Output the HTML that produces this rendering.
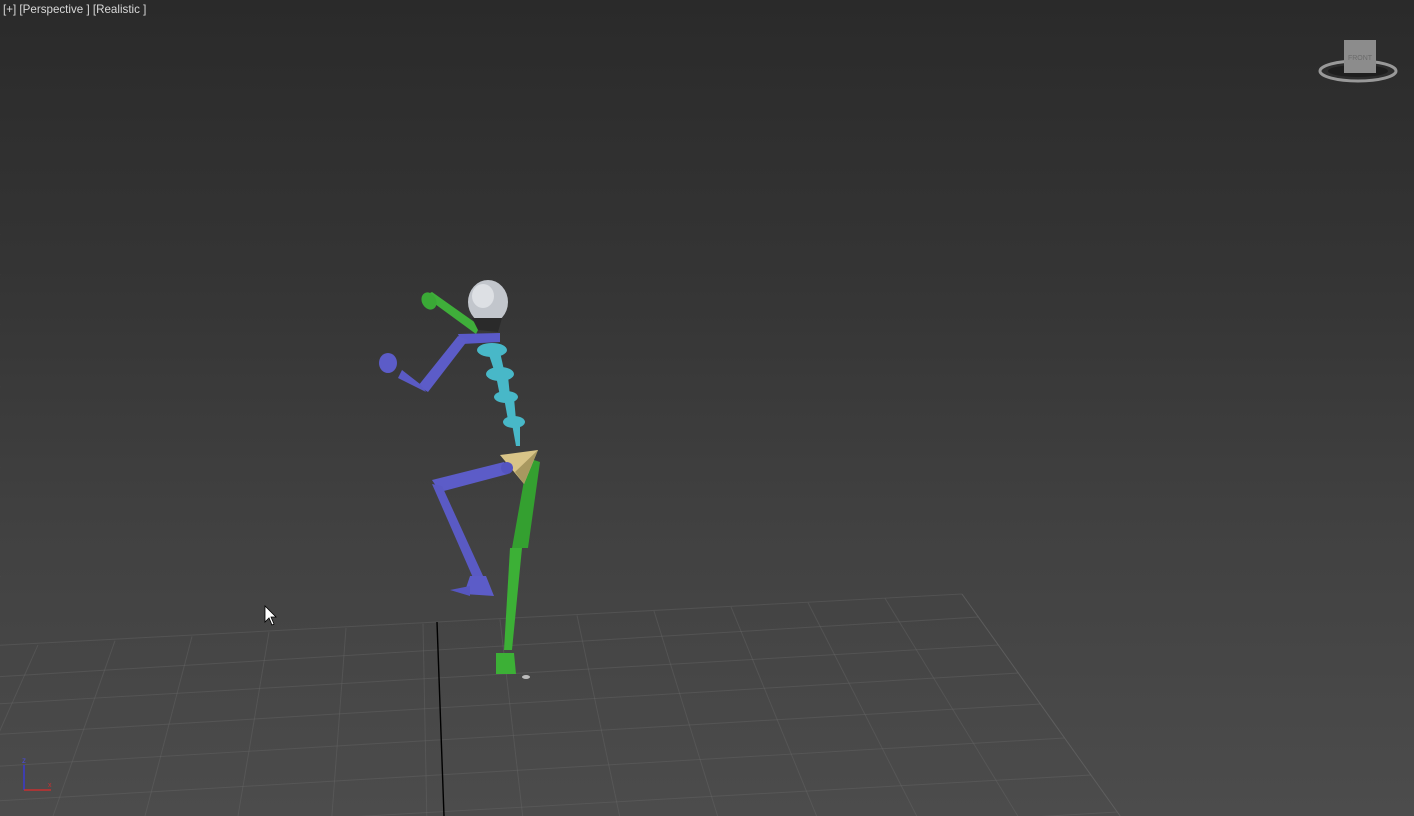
<!DOCTYPE html>
<html><head><meta charset="utf-8"><style>
html,body{margin:0;padding:0;width:1414px;height:816px;overflow:hidden}
body{background:linear-gradient(to bottom,#2a2a2a 0%,#353535 35%,#414141 65%,#4c4c4c 100%);position:relative;font-family:"Liberation Sans",sans-serif}
#lbl{position:absolute;left:3px;top:3px;font-size:11.6px;color:#d8d8d8;white-space:pre}
svg{position:absolute;left:0;top:0;overflow:hidden}
</style></head><body>
<svg width="1414" height="816" id="g">
<g id="grid" stroke="#6a6a6a" stroke-opacity="0.4" stroke-width="1" fill="none"></g>
<line x1="437" y1="622" x2="444" y2="816" stroke="#000" stroke-width="1.4"/>
<g stroke="none">
 <polygon points="424,296 432,292 480,326 476,334" fill="#3fae3a"/>
 <ellipse cx="429" cy="301" rx="7" ry="9" fill="#3aa936" transform="rotate(-30 429 301)"/>
 <ellipse cx="488" cy="302" rx="20" ry="22" fill="#c2c6cc"/>
 <ellipse cx="483" cy="296" rx="11" ry="12" fill="#dde0e4"/>
 <polygon points="472,318 502,318 498,332 478,330" fill="#2a2a2a"/>
 <polygon points="458,334 500,333 500,342 462,344" fill="#5a5ac8"/>
 <polygon points="458,336 468,340 428,392 418,386" fill="#5c5cc8"/>
 <polygon points="420,384 426,392 398,378 402,370" fill="#5a5ac4"/>
 <ellipse cx="388" cy="363" rx="9" ry="10" fill="#5c5cc8"/>
 <g fill="#48b8c8">
  <ellipse cx="492" cy="350" rx="15" ry="7"/>
  <polygon points="488,352 500,352 504,370 494,370"/>
  <ellipse cx="500" cy="374" rx="14" ry="7"/>
  <polygon points="496,376 508,376 510,396 500,396"/>
  <ellipse cx="506" cy="397" rx="12" ry="6"/>
  <polygon points="504,398 514,398 516,420 508,420"/>
  <ellipse cx="514" cy="422" rx="11" ry="6"/>
  <polygon points="512,424 520,424 520,446 516,446"/>
 </g>
 <polygon points="528,458 540,462 528,548 512,548" fill="#34a030"/>
 <polygon points="510,548 522,548 512,650 504,650" fill="#3cb036"/>
 <polygon points="496,653 514,653 516,674 496,674" fill="#3cb036"/>
 <polygon points="500,455 538,450 524,484" fill="#d8c488"/>
 <polygon points="515,472 538,450 524,484" fill="#a89860"/>
 <polygon points="432,480 504,462 508,474 440,492" fill="#5c5cc8"/>
 <circle cx="507" cy="468" r="6" fill="#5454c0"/>
 <polygon points="432,484 442,486 484,578 474,580" fill="#5a5ac4"/>
 <polygon points="470,576 486,576 494,596 464,594" fill="#5c5cc8"/>
 <polygon points="450,590 470,586 470,596" fill="#5656c0"/>
</g>
<ellipse cx="1358" cy="71" rx="38" ry="10" fill="none" stroke="#999" stroke-width="3"/>
<ellipse cx="1358" cy="71" rx="30" ry="6" fill="#1e1e1e"/>
<rect x="1344" y="40" width="32" height="33" fill="#8c8c8c"/>
<text x="1360" y="60" font-size="7" fill="#6a6a6a" text-anchor="middle" font-family="Liberation Sans">FRONT</text>
<line x1="24" y1="765" x2="24" y2="790" stroke="#3a3ad0" stroke-width="1.5"/>
<line x1="24" y1="790" x2="51" y2="790" stroke="#c83030" stroke-width="1.5"/>
<text x="22" y="763" font-size="8" fill="#4a4ad8" font-family="Liberation Sans">z</text>
<text x="48" y="787" font-size="7" fill="#c83030" font-family="Liberation Sans">x</text>
<ellipse cx="526" cy="677" rx="4" ry="2" fill="#bbb"/>
<path d="M265,606 L265,622 L269,618 L272,625 L274,624 L271,617 L276,617 Z" fill="#fff" stroke="#000" stroke-width="0.8"/>
</svg>
<div id="lbl">[+] [Perspective ] [Realistic ]</div>
<script>
var g=document.getElementById('grid'),s='';
var vx=407,vy=-185;
function rx(y){return 962+(962-vx)/(594-vy)*(y-594);}
var rws=[[622,594],[650,617],[678,645],[708,673],[740,704],[775,738],[812,775],[852,812]];
rws.forEach(function(r){var xr=rx(r[1]);var sl=(r[1]-r[0])/(xr-437);var yl=r[0]-sl*437;
 s+='<line x1="0" y1="'+yl.toFixed(1)+'" x2="'+xr.toFixed(1)+'" y2="'+r[1]+'"/>';});
s+='<line x1="962" y1="594" x2="'+rx(816).toFixed(1)+'" y2="816"/>';
for(var x=962;x>-500;x-=77){
 var y0=647-0.055*x;
 var t=(816-vy)/(y0-vy); var x2=vx+(x-vx)*t;
 var xs=x,ys=y0;
 if(x<0){var tt=(0-vx)/(x-vx); ys=vy+(y0-vy)*tt; xs=0; if(ys>816)continue;}
 s+='<line x1="'+xs+'" y1="'+ys.toFixed(1)+'" x2="'+x2.toFixed(1)+'" y2="816"/>';
}
g.innerHTML=s;
</script>
</body></html>
